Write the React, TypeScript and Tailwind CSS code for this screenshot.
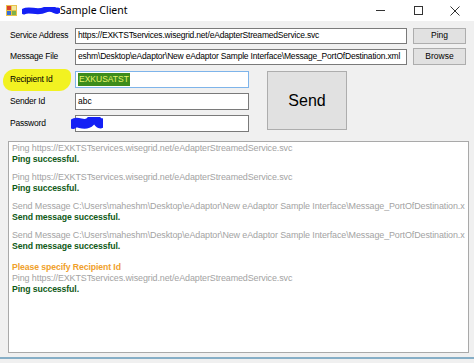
import React from "react";

const ui = { fontFamily: '"Liberation Sans", Arial, sans-serif' };

const serviceUrl = "https://EXKTSTservices.wisegrid.net/eAdapterStreamedService.svc";
const msgPath =
  "C:\\Users\\maheshm\\Desktop\\eAdaptor\\New eAdaptor Sample Interface\\Message_PortOfDestination.x";

type LogLine = { text: string; kind: "info" | "ok" | "warn" };

const groups: LogLine[][] = [
  [
    { text: "Ping " + serviceUrl, kind: "info" },
    { text: "Ping successful.", kind: "ok" },
  ],
  [
    { text: "Ping " + serviceUrl, kind: "info" },
    { text: "Ping successful.", kind: "ok" },
  ],
  [
    { text: "Send Message " + msgPath, kind: "info" },
    { text: "Send message successful.", kind: "ok" },
  ],
  [
    { text: "Send Message " + msgPath, kind: "info" },
    { text: "Send message successful.", kind: "ok" },
  ],
  [
    { text: "Please specify Recipient Id", kind: "warn" },
    { text: "Ping " + serviceUrl, kind: "info" },
    { text: "Ping successful.", kind: "ok" },
  ],
];

function AppIcon() {
  return (
    <svg width="11" height="11" viewBox="0 0 11 11">
      <rect x="0" y="0" width="11" height="11" fill="#e8c24a" />
      <rect x="1" y="1" width="4" height="4" fill="#d9412b" />
      <rect x="6" y="1" width="4" height="4" fill="#f3e7a0" />
      <rect x="1" y="6" width="4" height="4" fill="#3a6fd8" />
      <rect x="6" y="6" width="4" height="4" fill="#7fb24a" />
    </svg>
  );
}

function Scribble({ w, h }: { w: number; h: number }) {
  return (
    <svg width={w} height={h} viewBox={`0 0 ${w} ${h}`}>
      <path
        d={`M2 ${h * 0.55} C ${w * 0.2} ${h * 0.15}, ${w * 0.4} ${h * 0.85}, ${w * 0.6} ${h * 0.35} S ${w * 0.9} ${h * 0.75}, ${w - 2} ${h * 0.45}`}
        stroke="#1420f5"
        strokeWidth={h * 0.75}
        fill="none"
        strokeLinecap="round"
      />
    </svg>
  );
}

function Field({ label, children }: { label: string; children: React.ReactNode }) {
  return (
    <div className="flex items-center h-[17px]">
      <div className="w-[67px] pl-[2px] text-[8.5px] tracking-[-0.2px] text-black">{label}</div>
      {children}
    </div>
  );
}

export default function App() {
  return (
    <div className="w-[474px] h-[363px] bg-[#f0f0f0] overflow-hidden flex flex-col" style={ui}>
      {/* title bar */}
      <div className="h-[21px] bg-white flex items-center shrink-0">
        <div className="ml-[6px]">
          <AppIcon />
        </div>
        <div className="ml-[5px] mt-[1px]">
          <Scribble w={38} h={8} />
        </div>
        <span
          className="text-[10.5px] text-black"
          style={{ fontFamily: '"Noto Sans", "Open Sans", sans-serif' }}
        >
          Sample Client
        </span>
        <div className="ml-auto flex items-center">
          <div className="w-[40px] flex justify-center">
            <div className="w-[9px] h-px bg-[#333]" />
          </div>
          <div className="w-[36px] flex justify-center">
            <div className="w-[9px] h-[9px] border border-[#333]" />
          </div>
          <div className="w-[38px] flex justify-center">
            <svg width="10" height="10" viewBox="0 0 10 10">
              <path d="M0.5 0.5 L9.5 9.5 M9.5 0.5 L0.5 9.5" stroke="#333" strokeWidth="1" />
            </svg>
          </div>
        </div>
      </div>

      {/* form */}
      <div className="px-[8px] pt-[6px] flex flex-col">
        <div className="flex items-center">
          <Field label="Service Address">
            <div className="w-[332px] h-[16px] bg-white border border-[#7a7a7a] text-[8.5px] tracking-[-0.2px] pl-[2px] flex items-center overflow-hidden whitespace-nowrap">
              {serviceUrl}
            </div>
          </Field>
          <button className="ml-[6px] w-[55px] h-[16px] bg-[#e1e1e1] border border-[#adadad] text-[8.5px] text-black">
            Ping
          </button>
        </div>
        <div className="flex items-center mt-[4px]">
          <Field label="Message File">
            <div className="w-[332px] h-[16px] bg-white border border-[#7a7a7a] text-[8.5px] tracking-[-0.2px] pl-[2px] flex items-center overflow-hidden whitespace-nowrap">
              eshm\Desktop\eAdaptor\New eAdaptor Sample Interface\Message_PortOfDestination.xml
            </div>
          </Field>
          <button className="ml-[6px] w-[55px] h-[17px] bg-[#e1e1e1] border border-[#adadad] text-[8.5px] text-black">
            Browse
          </button>
        </div>

        <div className="flex mt-[6px]">
          <div className="relative flex flex-col gap-[5px]">
            <div className="absolute left-[-5px] top-[-2px] w-[68px] h-[22px] bg-[#f2f20a] rounded-[12px_6px_12px_9px] opacity-90" />
            <div className="relative">
              <Field label="Recipient Id">
                <div className="w-[174px] h-[17px] bg-white border border-[#7eb4ea] pl-[2px] flex items-center">
                  <span className="bg-[#3d8c1c] text-[#e6f56e] text-[8.5px] px-[1px] leading-[13px]">EXKUSATST</span>
                </div>
              </Field>
            </div>
            <Field label="Sender Id">
              <div className="w-[174px] h-[17px] bg-white border border-[#7a7a7a] text-[8.5px] pl-[2px] flex items-center">
                abc
              </div>
            </Field>
            <Field label="Password">
              <div className="relative w-[174px] h-[17px] bg-white border border-[#7a7a7a]">
                <div className="absolute left-[-5px] top-[1px]">
                  <Scribble w={32} h={13} />
                </div>
              </div>
            </Field>
          </div>
          <button className="ml-[18px] w-[80px] h-[59px] bg-[#e1e1e1] border border-[#adadad] text-[16px] text-black">
            Send
          </button>
        </div>

        {/* log */}
        <div className="mt-[9px] w-[461px] h-[212px] bg-white border border-[#a9a9a9] pl-[3px] pt-[1px] overflow-hidden">
          {groups.map((g, i) => (
            <div key={i} className={i === 0 ? "" : i === 4 ? "mt-[10px]" : "mt-[7px]"}>
              {g.map((l, j) => (
                <div
                  key={j}
                  className={
                    "leading-[11px] whitespace-nowrap " +
                    (l.kind === "info"
                      ? "text-[8.95px] text-[#a3a3a3] tracking-[-0.1px]"
                      : l.kind === "ok"
                      ? "text-[8.7px] text-[#0f5a16] font-bold tracking-[-0.1px]"
                      : "text-[8.7px] text-[#f0a02a] font-bold tracking-[-0.1px]")
                  }
                >
                  {l.text}
                </div>
              ))}
            </div>
          ))}
        </div>
      </div>
      <div className="mt-[4px] h-[2px] bg-[#86aec6]" />
    </div>
  );
}
